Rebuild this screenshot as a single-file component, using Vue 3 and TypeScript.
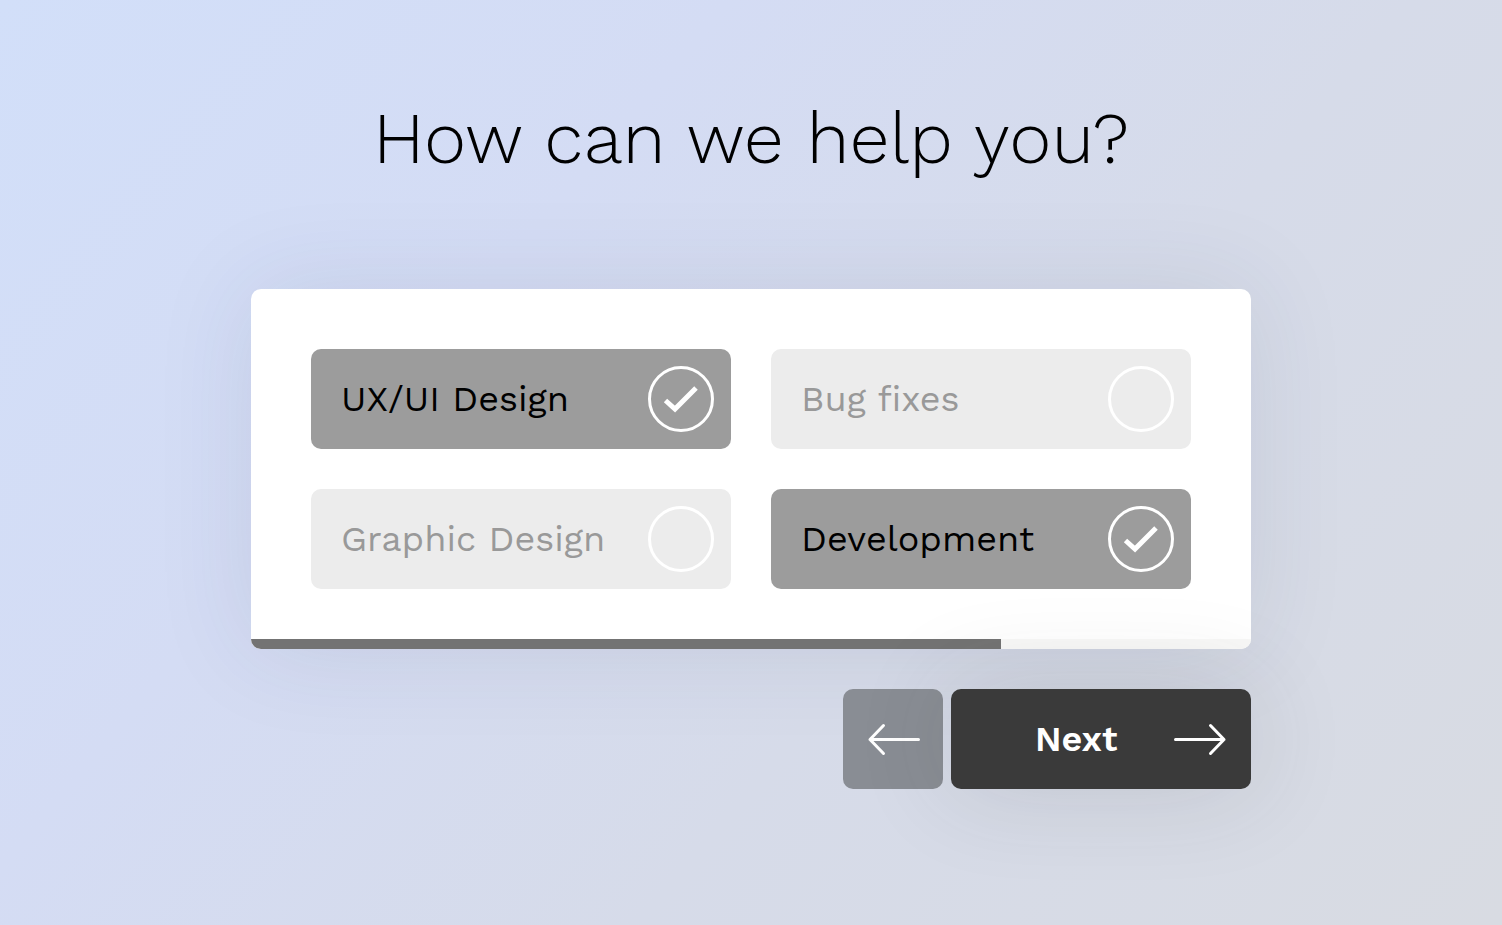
<script setup lang="ts">
import { ref } from 'vue'

interface Option {
  id: string
  label: string
  checked: boolean
}

const options = ref<Option[]>([
  { id: 'ux', label: 'UX/UI Design', checked: true },
  { id: 'bugs', label: 'Bug fixes', checked: false },
  { id: 'graphic', label: 'Graphic Design', checked: false },
  { id: 'dev', label: 'Development', checked: true },
])

const progress = ref<number>(75)
</script>

<template>
  <main class="page">
    <form class="survey" @submit.prevent>
      <h1 class="title">How can we help you?</h1>
      <div class="card">
        <div class="options">
          <label
            v-for="option in options"
            :key="option.id"
            class="option"
            :class="{ selected: option.checked }"
            :for="option.id"
          >
            <span class="name">{{ option.label }}</span>
            <span class="tick">
              <input :id="option.id" v-model="option.checked" type="checkbox" class="box" />
              <svg v-if="option.checked" class="check" viewBox="0 0 66 66" aria-hidden="true">
                <path d="M17.500 34.500L27 43L48 22" />
              </svg>
            </span>
          </label>
        </div>
        <div class="track" role="progressbar" aria-label="Progress" :aria-valuenow="progress" aria-valuemin="0" aria-valuemax="100">
          <div class="bar" :style="{ width: progress + '%' }"></div>
        </div>
      </div>
      <div class="actions">
        <button type="button" class="back" aria-label="Back">
          <svg class="arrow" viewBox="0 0 54 34" aria-hidden="true">
            <path d="M51.500 17.500H3M16.500 3.500L3 17.500L16.500 31.500" />
          </svg>
        </button>
        <button type="submit" class="next">
          <span class="next-text">Next</span>
          <svg class="arrow" viewBox="0 0 54 34" aria-hidden="true">
            <path d="M2.500 17.500H51M37.500 3.500L51 17.500L37.500 31.500" />
          </svg>
        </button>
      </div>
    </form>
  </main>
</template>

<style>
body {
  margin: 0;
}
</style>

<style scoped>
.page {
  box-sizing: border-box;
  min-height: 100vh;
  padding: 94px 24px;
  display: flex;
  justify-content: center;
  align-items: flex-start;
  font-family: "Work Sans", Inter, "Liberation Sans", sans-serif;
  background: linear-gradient(130deg, #d2dff9 0%, #d4dcf4 32%, #d6dbe9 62%, #d8dbe2 100%);
}

.survey {
  width: 100%;
  max-width: 1000px;
}

.title {
  margin: 0 0 107px;
  font-size: 72px;
  line-height: 88px;
  font-weight: 300;
  text-align: center;
  color: #000;
}

.card {
  border-radius: 10px;
  background: #fff;
  box-shadow: 0 0 100px rgba(50, 60, 90, 0.1);
}

.options {
  display: grid;
  grid-template-columns: repeat(2, 1fr);
  gap: 40px;
  padding: 60px 60px 50px;
}

.option {
  box-sizing: border-box;
  height: 100px;
  padding: 0 17px 0 30px;
  display: flex;
  align-items: center;
  justify-content: space-between;
  border-radius: 10px;
  background: #ececec;
  color: #999;
  font-size: 36px;
  line-height: 44px;
  font-weight: 400;
  cursor: pointer;
}

.option.selected {
  background: #9c9c9c;
  color: #000;
}

.tick {
  display: grid;
  width: 66px;
  height: 66px;
}

.box,
.check {
  grid-area: 1 / 1;
  width: 66px;
  height: 66px;
}

.box {
  appearance: none;
  box-sizing: border-box;
  margin: 0;
  border: 3px solid #fff;
  border-radius: 50%;
  cursor: pointer;
}

.check {
  fill: none;
  stroke: #fff;
  stroke-width: 5;
  pointer-events: none;
}

.track {
  height: 10px;
  overflow: hidden;
  border-radius: 0 0 10px 10px;
  background: #f8f8f7;
}

.bar {
  height: 100%;
  background: #737373;
}

.actions {
  display: flex;
  justify-content: flex-end;
  gap: 8px;
  margin-top: 40px;
}

.back,
.next {
  box-sizing: border-box;
  height: 100px;
  border: 0;
  border-radius: 10px;
  color: #fff;
  font-family: inherit;
  cursor: pointer;
}

.back {
  width: 100px;
  padding: 0 22px 0 24px;
  background: #898d94;
}

.next {
  width: 300px;
  padding: 0 24px 0 84px;
  display: flex;
  align-items: center;
  justify-content: space-between;
  background: #3a3a3a;
  box-shadow: 0 0 100px rgba(60, 60, 60, 0.14);
  font-size: 36px;
  line-height: 44px;
  font-weight: 600;
}

.arrow {
  display: block;
  width: 54px;
  height: 34px;
  fill: none;
  stroke: #fff;
  stroke-width: 3;
  stroke-linecap: round;
  stroke-linejoin: round;
}
</style>
